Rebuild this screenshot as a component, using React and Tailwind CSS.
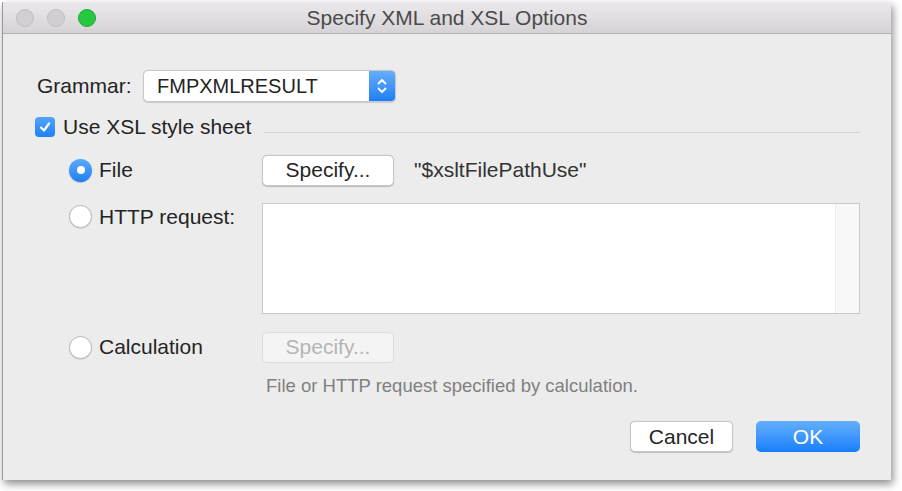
import React from 'react';

const font = { fontFamily: '"Liberation Sans", Arial, sans-serif' };

// macOS style radio button
const Radio = ({ checked }) =>
  checked ? (
    <span className="flex items-center justify-center w-[23px] h-[23px] rounded-full bg-gradient-to-b from-[#5aa8fa] to-[#1e80f5] shadow-[0_0.5px_1px_rgba(0,0,0,0.3)]">
      <span className="w-[8px] h-[8px] rounded-full bg-white" />
    </span>
  ) : (
    <span className="block w-[23px] h-[23px] rounded-full bg-white border border-[#b9b9b9] shadow-[0_0.5px_1px_rgba(0,0,0,0.15)]" />
  );

const Button = ({ children, disabled, primary, className = '' }) => {
  if (primary) {
    return (
      <div className={`flex items-center justify-center h-[31px] rounded-[5px] bg-gradient-to-b from-[#62aefc] to-[#137ffb] text-white text-[21px] ${className}`}>
        {children}
      </div>
    );
  }
  return (
    <div
      className={`flex items-center justify-center h-[31px] rounded-[5px] border text-[21px] ${
        disabled
          ? 'bg-[#f4f4f4] border-[#dcdcdc] text-[#b4b4b4]'
          : 'bg-white border-[#c6c6c6] text-[#262626] shadow-[0_0.5px_1px_rgba(0,0,0,0.2)]'
      } ${className}`}
    >
      {children}
    </div>
  );
};

export default function App() {
  return (
    <div className="w-[902px] h-[491px] bg-white pt-[2px] pl-[2px]" style={font}>
      <div className="w-[889px] h-[478px] bg-[#ececec] border-l border-[#9a9a9a] shadow-[2px_4px_8px_rgba(0,0,0,0.45)] flex flex-col">
        {/* title bar */}
        <div className="relative flex items-center justify-center h-[32px] bg-gradient-to-b from-[#ebe9eb] to-[#d5d3d5] border-b border-[#b1b1b1]">
          <div className="absolute left-[13px] top-[7px] flex gap-[13px]">
            <span className="w-[18px] h-[18px] rounded-full bg-[#d1d0d1] border border-[#c0bfc0]" />
            <span className="w-[18px] h-[18px] rounded-full bg-[#d1d0d1] border border-[#c0bfc0]" />
            <span className="w-[18px] h-[18px] rounded-full bg-[#25c83e] border border-[#1eab33]" />
          </div>
          <span className="text-[21px] text-[#4a4a4a]">Specify XML and XSL Options</span>
        </div>

        <div className="flex flex-col pl-[32px] pr-[31px] text-[#242424] text-[21px]">
          {/* grammar */}
          <div className="flex items-center h-[32px] mt-[36px]">
            <span className="w-[108px] pl-[2px]">Grammar:</span>
            <div className="flex w-[253px] h-[32px] rounded-[5px] bg-white border border-[#c8c8c8] shadow-[0_0.5px_1px_rgba(0,0,0,0.15)] overflow-hidden">
              <span className="flex-1 flex items-center pl-[13px] text-[20px]">FMPXMLRESULT</span>
              <span className="w-[26px] flex items-center justify-center bg-gradient-to-b from-[#66adfb] to-[#1a7ef6]">
                <svg width="12" height="20" viewBox="0 0 12 20" fill="none" stroke="white" strokeWidth="1.8" strokeLinecap="round" strokeLinejoin="round">
                  <path d="M2.5 7.5 L6 4 L9.5 7.5" />
                  <path d="M2.5 12.5 L6 16 L9.5 12.5" />
                </svg>
              </span>
            </div>
          </div>

          {/* use xsl */}
          <div className="flex items-center h-[20px] mt-[15px]">
            <span className="flex items-center justify-center w-[20px] h-[20px] rounded-[4px] bg-gradient-to-b from-[#52a3f9] to-[#1f80f5]">
              <svg width="14" height="14" viewBox="0 0 14 14" fill="none" stroke="white" strokeWidth="2.2" strokeLinecap="round" strokeLinejoin="round">
                <path d="M3 7.5 L6 10.5 L11 3.5" />
              </svg>
            </span>
            <span className="ml-[8px]">Use XSL style sheet</span>
            <span className="flex-1 ml-[13px] mt-[10px] h-px bg-[#d4d4d4]" />
          </div>

          {/* file */}
          <div className="flex items-center h-[30px] mt-[18px] pl-[34px]">
            <div className="flex items-center w-[193px]">
              <Radio checked />
              <span className="ml-[7px]">File</span>
            </div>
            <Button className="w-[132px]">Specify...</Button>
            <span className="ml-[20px] text-[#333]">"$xsltFilePathUse"</span>
          </div>

          {/* http request */}
          <div className="flex items-start mt-[16px] pl-[34px]">
            <div className="flex items-center w-[193px]">
              <Radio />
              <span className="ml-[7px]">HTTP request:</span>
            </div>
            <div className="flex-1 flex h-[111px] mt-[2px] bg-white border border-[#c9c9c9]">
              <div className="flex-1" />
              <div className="w-[24px] bg-[#f8f8f8] border-l border-[#ebebeb]" />
            </div>
          </div>

          {/* calculation */}
          <div className="flex items-center h-[30px] mt-[18px] pl-[34px]">
            <div className="flex items-center w-[193px]">
              <Radio />
              <span className="ml-[7px]">Calculation</span>
            </div>
            <Button disabled className="w-[132px]">Specify...</Button>
          </div>

          <div className="mt-[14px] pl-[231px] text-[18.5px] leading-[20px] text-[#808080]">
            File or HTTP request specified by calculation.
          </div>

          {/* buttons */}
          <div className="flex justify-end gap-[23px] mt-[25px]">
            <Button className="w-[103px]">Cancel</Button>
            <Button primary className="w-[104px]">OK</Button>
          </div>
        </div>
      </div>
    </div>
  );
}
